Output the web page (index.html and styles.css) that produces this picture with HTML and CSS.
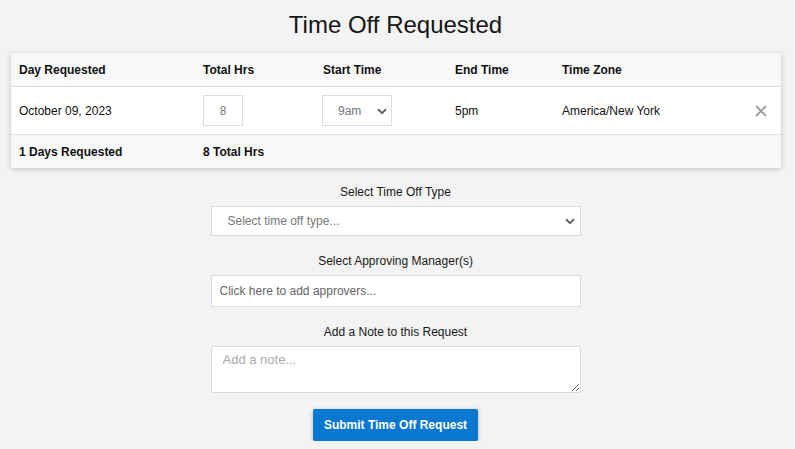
FILE: index.html
```html
<!DOCTYPE html>
<html lang="en">
<head>
  <meta charset="UTF-8">
  <meta name="viewport" content="width=device-width, initial-scale=1.0">
  <title>Time Off Requested</title>
  <link rel="stylesheet" href="styles.css">
</head>
<body>
  <h1 class="page-title">Time Off Requested</h1>

  <div class="request-card">
    <div class="row row-head">
      <div>Day Requested</div>
      <div>Total Hrs</div>
      <div>Start Time</div>
      <div>End Time</div>
      <div>Time Zone</div>
      <div></div>
    </div>
    <div class="row row-body">
      <div>October 09, 2023</div>
      <div><input class="hrs-input" type="text" value="8"></div>
      <div>
        <div class="select-wrap small">
          <select class="time-select">
            <option>9am</option>
          </select>
          <svg class="chevron" width="10" height="7" viewBox="0 0 10 7"><path d="M1 1.2 L5 5.2 L9 1.2" fill="none" stroke="#666" stroke-width="2"/></svg>
        </div>
      </div>
      <div>5pm</div>
      <div>America/New York</div>
      <div class="remove">
        <svg width="12" height="12" viewBox="0 0 12 12"><path d="M1 1 L11 11 M11 1 L1 11" stroke="#999" stroke-width="1.8"/></svg>
      </div>
    </div>
    <div class="row row-foot">
      <div>1 Days Requested</div>
      <div>8 Total Hrs</div>
      <div></div>
      <div></div>
      <div></div>
      <div></div>
    </div>
  </div>

  <form class="request-form">
    <label class="field-label">Select Time Off Type</label>
    <div class="select-wrap wide">
      <select class="type-select">
        <option>Select time off type...</option>
      </select>
      <svg class="chevron" width="10" height="7" viewBox="0 0 10 7"><path d="M1 1.2 L5 5.2 L9 1.2" fill="none" stroke="#666" stroke-width="2"/></svg>
    </div>

    <label class="field-label">Select Approving Manager(s)</label>
    <input class="approvers" type="text" placeholder="Click here to add approvers...">

    <label class="field-label">Add a Note to this Request</label>
    <textarea class="note" placeholder="Add a note..."></textarea>

    <button type="button" class="submit-btn">Submit Time Off Request</button>
  </form>
</body>
</html>
```

FILE: styles.css
```css
body {
  margin: 0;
  background: #f3f3f3;
  font-family: 'Liberation Sans', Arial, sans-serif;
  color: #111;
  font-size: 12px;
}
.page-title {
  margin: 0;
  padding: 10px 4px 0 0;
  height: 43px;
  text-align: center;
  font-size: 24px;
  font-weight: normal;
  line-height: 29px;
  color: #151515;
}
.request-card {
  margin: 0 14px 0 11px;
  background: #fff;
  box-shadow: 0 1px 5px rgba(0, 0, 0, 0.22);
}
.row {
  display: grid;
  grid-template-columns: 184px 119px 133px 107px 1fr 12px;
  align-items: center;
  padding: 0 14px 0 8px;
}
.row-head {
  height: 33px;
  background: #f8f8f8;
  font-weight: bold;
  border-bottom: 1px solid #dcdcdc;
}
.row-body {
  height: 47px;
  background: #fff;
  border-bottom: 1px solid #dcdcdc;
}
.row-foot {
  height: 33px;
  background: #f8f8f8;
  font-weight: bold;
}
.row-head div:nth-child(3) {
  padding-left: 1px;
}
.hrs-input {
  box-sizing: border-box;
  width: 40px;
  height: 31px;
  border: 1px solid #ddd;
  text-align: center;
  font-family: inherit;
  font-size: 12px;
  color: #777;
  padding: 0;
  outline: none;
}
.select-wrap {
  position: relative;
  display: inline-block;
}
.select-wrap select {
  appearance: none;
  -webkit-appearance: none;
  box-sizing: border-box;
  background: #fff;
  border: 1px solid #ddd;
  border-radius: 0;
  font-family: inherit;
  font-size: 12px;
  color: #777;
  outline: none;
}
.time-select {
  width: 70px;
  height: 31px;
  padding: 0 0 0 15px;
}
.select-wrap .chevron {
  position: absolute;
  top: 50%;
  margin-top: -3px;
  pointer-events: none;
}
.small .chevron {
  right: 5px;
}
.remove {
  display: flex;
  align-items: center;
  justify-content: center;
}
.request-form {
  width: 370px;
  margin-left: calc(50% - 187px);
  display: flex;
  flex-direction: column;
  align-items: center;
  padding-top: 17px;
}
.field-label {
  font-size: 12px;
  color: #1a1a1a;
  line-height: 14px;
  margin-bottom: 7px;
}
.wide {
  width: 370px;
  margin-bottom: 18px;
}
.type-select {
  display: block;
  width: 370px;
  height: 30px;
  padding: 0 0 0 16px;
}
.wide .chevron {
  right: 6px;
}
.approvers {
  box-sizing: border-box;
  width: 370px;
  height: 32px;
  border: 1px solid #ddd;
  padding: 0 8px;
  font-family: inherit;
  font-size: 12px;
  margin: 0 0 18px;
  outline: none;
}
.approvers::placeholder {
  color: #666;
}
.note {
  display: block;
  box-sizing: border-box;
  width: 370px;
  height: 47px;
  border: 1px solid #ddd;
  padding: 5px 11px;
  font-family: inherit;
  font-size: 13px;
  margin: 0 0 16px;
  outline: none;
}
.note::placeholder {
  color: #aaa;
}
.submit-btn {
  width: 165px;
  height: 32px;
  border: none;
  border-radius: 2px;
  background: #0a78d1;
  color: #fff;
  font-family: inherit;
  font-size: 12px;
  font-weight: bold;
  box-shadow: 0 1px 4px rgba(0, 0, 0, 0.25);
  cursor: pointer;
}
```
